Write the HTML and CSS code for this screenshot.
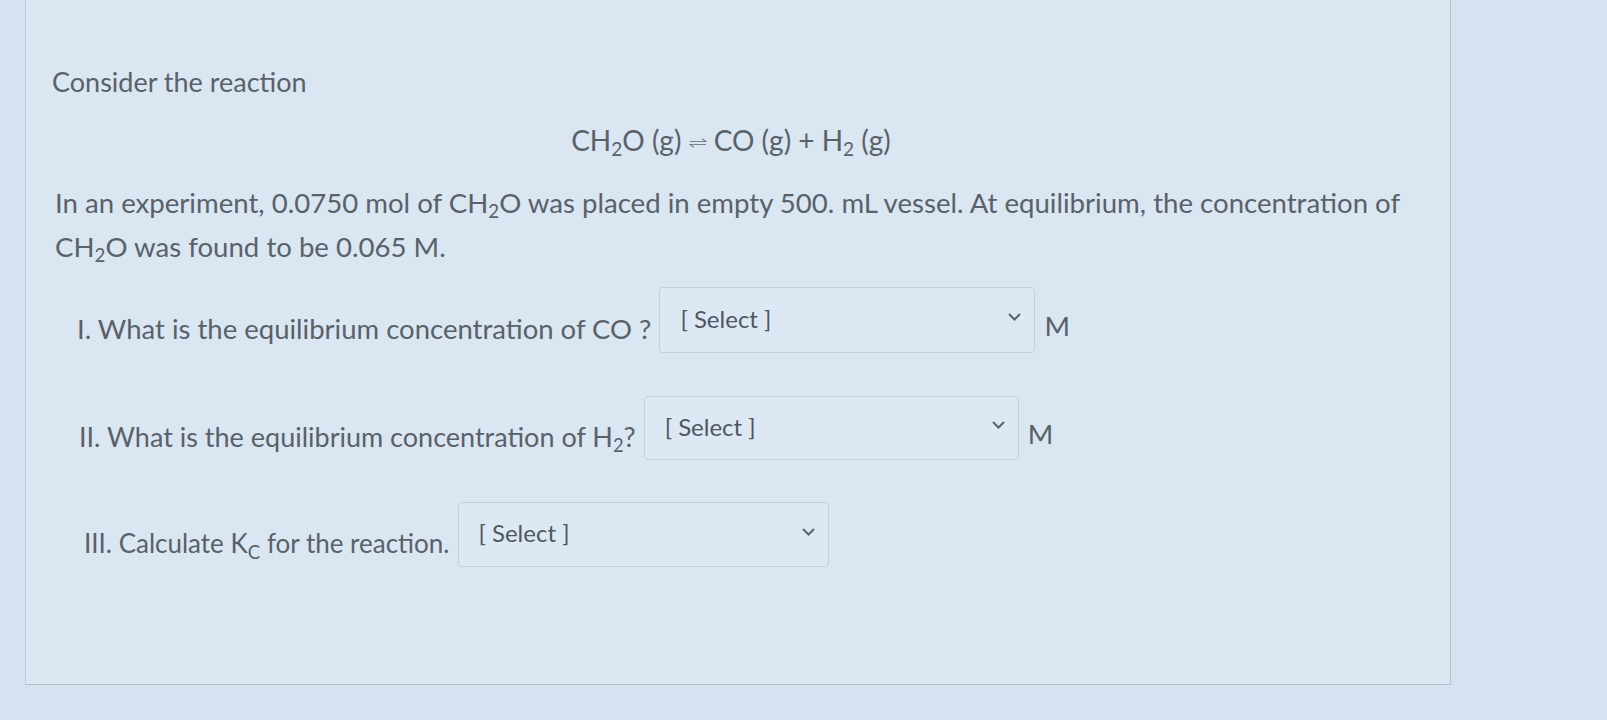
FILE: index.html
```html
<!DOCTYPE html>
<html>
<head>
<meta charset="utf-8">
<link rel="stylesheet" href="styles.css">
</head>
<body>
<div class="page">
  <div class="card">
    <p class="intro">Consider the reaction</p>
    <p class="equation">CH<sub>2</sub>O (g) <svg class="eq-arrow" width="18" height="10" viewBox="0 0 18 10"><path d="M1 3.5H17L13 0.8" fill="none" stroke="#7a8289" stroke-width="1.1"/><path d="M17 6.5H1L5 9.2" fill="none" stroke="#7a8289" stroke-width="1.1"/></svg> CO (g) + H<sub>2</sub> (g)</p>
    <p class="para">In an experiment, 0.0750 mol of CH<sub>2</sub>O was placed in empty 500. mL vessel. At equilibrium, the concentration of<br>CH<sub>2</sub>O was found to be 0.065 M.</p>

    <div class="question q1">
      <span class="label">I. What is the equilibrium concentration of CO ?</span>
      <div class="select s1"><span class="sel-text">[ Select ]</span><svg class="chev" width="15" height="10" viewBox="0 0 15 10"><path d="M2 2L7.5 7.5L13 2" fill="none" stroke="#5b636b" stroke-width="2"/></svg></div>
      <span class="unit">M</span>
    </div>

    <div class="question q2">
      <span class="label">II. What is the equilibrium concentration of H<sub>2</sub>?</span>
      <div class="select s2"><span class="sel-text">[ Select ]</span><svg class="chev" width="15" height="10" viewBox="0 0 15 10"><path d="M2 2L7.5 7.5L13 2" fill="none" stroke="#5b636b" stroke-width="2"/></svg></div>
      <span class="unit">M</span>
    </div>

    <div class="question q3">
      <span class="label">III. Calculate K<sub class="kc">C</sub> for the reaction.</span>
      <div class="select s3"><span class="sel-text">[ Select ]</span><svg class="chev" width="15" height="10" viewBox="0 0 15 10"><path d="M2 2L7.5 7.5L13 2" fill="none" stroke="#5b636b" stroke-width="2"/></svg></div>
    </div>
  </div>
</div>
</body>
</html>
```
FILE: styles.css
```css
html, body {
  margin: 0;
  padding: 0;
}
body {
  background: #d6e2ef;
  font-family: Lato, "Open Sans", "Liberation Sans", sans-serif;
  color: #596169;
  width: 1607px;
  height: 720px;
  overflow: hidden;
}
.page {
  padding-left: 25px;
}
.card {
  width: 1426px;
  height: 685px;
  box-sizing: border-box;
  background: #dbe6f3;
  border-left: 1px solid #c3ccd5;
  border-right: 1px solid #b9c3cd;
  border-bottom: 1px solid #b4bec8;
  padding: 64px 0 0 26px;
}
p {
  margin: 0;
}
.intro {
  font-size: 27px;
  line-height: 36px;
}
.equation {
  margin-top: 22px;
  font-size: 28px;
  line-height: 36px;
  text-align: center;
  padding-right: 40px;
}
sub {
  font-size: 0.68em;
  line-height: 1;
  vertical-align: -0.25em;
}
.eq-arrow {
  vertical-align: 3px;
}
.para {
  margin-top: 23px;
  padding-left: 3px;
  font-size: 27.6px;
  line-height: 44px;
  white-space: nowrap;
}
.question {
  display: flex;
  align-items: center;
}
.label {
  margin-top: 18px;
  line-height: 34px;
  white-space: nowrap;
}
.q1 {
  margin-top: 18px;
  padding-left: 25px;
  font-size: 27.5px;
}
.q2 {
  margin-top: 43px;
  padding-left: 27px;
  font-size: 27px;
}
.q3 {
  margin-top: 42px;
  padding-left: 32px;
  font-size: 26px;
}
.select {
  display: flex;
  align-items: center;
  justify-content: space-between;
  box-sizing: border-box;
  margin-left: 8px;
  height: 66px;
  border: 1px solid #c5cfd9;
  border-radius: 4px;
  background: #dde8f5;
  padding: 0 12px 0 20px;
}
.s1 { width: 376px; }
.s2 { width: 375px; height: 64px; }
.s3 { width: 371px; height: 65px; }
.sel-text {
  font-size: 24px;
  color: #4f575f;
  margin-top: -4px;
}
.chev {
  margin-top: -6px;
}
.unit {
  margin-left: 9px;
  margin-top: 10px;
  font-size: 27.5px;
}
.kc {
  font-size: 0.72em;
  vertical-align: -0.3em;
}
```
